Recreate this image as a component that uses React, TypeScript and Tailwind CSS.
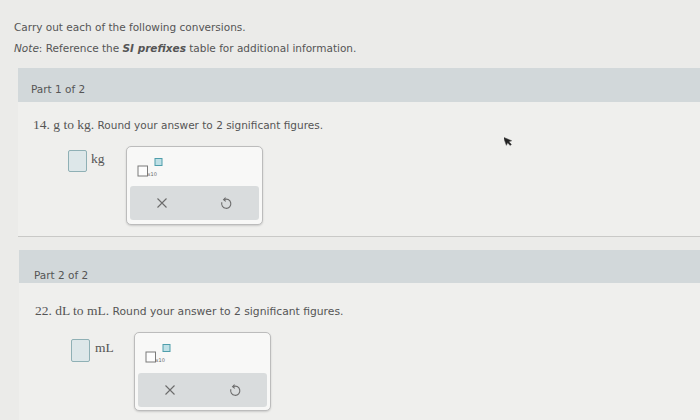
import React from "react";

function TimesTen() {
  return (
    <svg width="28" height="22" viewBox="0 0 28 22">
      <rect x="1" y="9" width="9.5" height="10" fill="#fdfdfd" stroke="#7a7a7a" strokeWidth="1" />
      <text x="10.5" y="18.5" fontSize="5" fill="#666" fontFamily="'DejaVu Sans', sans-serif">x10</text>
      <rect x="18" y="1.5" width="7" height="7" fill="#bfe0e6" stroke="#4f9eab" strokeWidth="1" />
    </svg>
  );
}

function XIcon() {
  return (
    <svg width="12" height="12" viewBox="0 0 12 12">
      <path d="M1.5 1.5 L10.5 10.5 M10.5 1.5 L1.5 10.5" stroke="#6b6b6b" strokeWidth="1.1" fill="none" />
    </svg>
  );
}

function UndoIcon() {
  return (
    <svg width="12" height="13" viewBox="0 0 12 13">
      <path d="M4.2 2.6 A4.6 4.6 0 1 1 1.9 5.2" stroke="#6b6b6b" strokeWidth="1.1" fill="none" />
      <path d="M5.6 0.6 L3.6 2.6 L5.8 4.4" stroke="#6b6b6b" strokeWidth="1.1" fill="none" />
    </svg>
  );
}

function Popup({ barTop }: { barTop: string }) {
  return (
    <div className="w-[137px] h-[79px] rounded-[5px] border border-[#bcbcbc] bg-[#f8f8f7] shadow-[0_1px_2px_rgba(0,0,0,0.15)] px-[3px] flex flex-col">
      <div className={`${barTop} pl-[7px] pt-[10px]`}>
        <TimesTen />
      </div>
      <div className="h-[34px] rounded-[3px] bg-[#d9dcdd] grid grid-cols-2 items-center">
        <div className="flex justify-center"><XIcon /></div>
        <div className="flex justify-center"><UndoIcon /></div>
      </div>
    </div>
  );
}

export default function App() {
  const serif = "font-['Liberation_Serif',serif]";
  return (
    <div className="relative w-[700px] h-[420px] overflow-hidden bg-[#ebebe9] text-[#555] font-['DejaVu_Sans',sans-serif] text-[10.5px] leading-[14px]">
      <div className="pl-[14px] pt-[20px]">
        <p>Carry out each of the following conversions.</p>
        <p className="mt-[7px]">
          <i>Note</i>: Reference the <b><i>SI prefixes</i></b> table for additional information.
        </p>
      </div>

      {/* Part 1 */}
      <div className="ml-[18px] mt-[13px]">
        <div className="h-[34px] bg-[#d2d8da] pl-[13px] pt-[14px]">Part 1 of 2</div>
        <div className="h-[135px] bg-[#efefed] border-b border-[#c9c9c7] pl-[15px] pt-[16px]">
          <p>
            <span className={`${serif} text-[13.5px]`}>14. g to kg.</span> Round your answer to 2 significant figures.
          </p>
          <div className="mt-[14px] pl-[35px] flex items-start">
            <div className="mt-[4px] w-[19px] h-[22px] rounded-[2px] border border-[#8fb0b5] bg-[#dde7e9]" />
            <span className={`${serif} text-[13.5px] ml-[4px] mt-[6px] leading-[14px]`}>kg</span>
            <div className="ml-[21px]">
              <Popup barTop="h-[39px]" />
            </div>
          </div>
        </div>
      </div>

      {/* Part 2 */}
      <div className="ml-[19px] mt-[13px]">
        <div className="h-[33px] bg-[#d2d8da] pl-[15px] pt-[19px] leading-[12px]">Part 2 of 2</div>
        <div className="h-[160px] bg-[#efefed] pl-[16px] pt-[21px]">
          <p className="text-[10.75px]">
            <span className={`${serif} text-[13.5px]`}>22. dL to mL.</span> Round your answer to 2 significant figures.
          </p>
          <div className="mt-[13px] pl-[36px] flex items-start">
            <div className="mt-[7px] w-[19px] h-[23px] rounded-[2px] border border-[#8fb0b5] bg-[#dde7e9]" />
            <span className={`${serif} text-[13.5px] ml-[5px] mt-[9px] leading-[14px]`}>mL</span>
            <div className="ml-[20px]">
              <Popup barTop="h-[40px]" />
            </div>
          </div>
        </div>
      </div>

      {/* mouse cursor */}
      <svg className="absolute left-[504px] top-[135px]" width="9" height="12" viewBox="0 0 9 12">
        <path d="M1 1 L1 9.5 L3 7.6 L4.6 11 L6 10.3 L4.5 7 L7.5 7 Z" fill="#222" stroke="#444" strokeWidth="0.5" transform="rotate(-20 4 6)" />
      </svg>
    </div>
  );
}
